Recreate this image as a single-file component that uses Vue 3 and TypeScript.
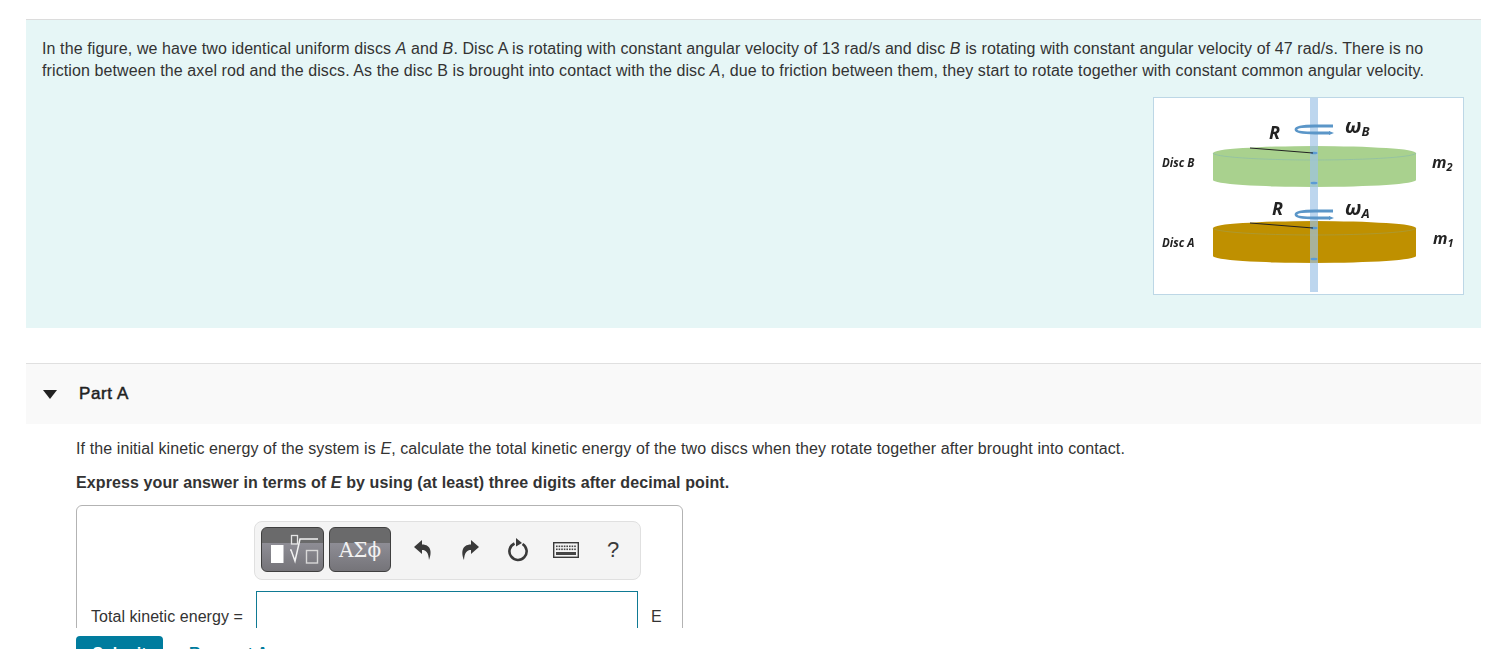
<script setup lang="ts">
const keys: number[] = [0, 1, 2, 3, 4, 5, 6, 7];
</script>

<template>
  <main class="page">
    <section class="intro">
      <p class="intro-text">
        In the figure, we have two identical uniform discs <i>A</i> and <i>B</i>. Disc A is rotating with constant angular velocity of 13 rad/s and disc <i>B</i> is rotating with constant angular velocity of 47 rad/s. There is no friction between the axel rod and the discs. As the disc B is brought into contact with the disc <i>A</i>, due to friction between them, they start to rotate together with constant common angular velocity.
      </p>
      <div class="figure-row">
        <svg class="figure" width="311" height="198" viewBox="0 0 311 198">
          <rect x="0.5" y="0.5" width="310" height="197" fill="#fff" stroke="#bdd7e6" />
          <path d="M60 56 A101.500 7 0 0 1 263 56 V83 A101.500 7 0 0 1 60 83 Z" fill="#a9d18e" />
          <path d="M60 56 A101.500 7 0 0 0 263 56" fill="none" stroke="#8fbfa6" stroke-width="0.8" />
          <path d="M60 131 A101.500 7 0 0 1 263 131 V159 A101.500 7 0 0 1 60 159 Z" fill="#bf9000" />
          <path d="M60 131 A101.500 7 0 0 0 263 131" fill="none" stroke="#a89a3a" stroke-width="0.8" />
          <rect x="157" y="1" width="8" height="194" fill="#9dc3e6" opacity="0.68" />
          <g fill="#5b9bd5">
            <ellipse cx="161" cy="56" rx="3.500" ry="1.300" />
            <ellipse cx="161" cy="86" rx="3.500" ry="1.300" />
            <ellipse cx="161" cy="131" rx="3.500" ry="1.300" />
            <ellipse cx="161" cy="162" rx="3.500" ry="1.300" />
          </g>
          <g fill="none" stroke="#5b96c8" stroke-width="2.800">
            <path d="M180 29 H162 C150 29 143 30 143 32.500 C143 35 150 36 162 36 H177" />
            <path d="M180 114 H162 C150 114 143 115 143 117.500 C143 120 150 121 162 121 H177" />
          </g>
          <g fill="#5b96c8">
            <path d="M176 34 L181 36 L176 38 Z" />
            <path d="M176 119 L181 121 L176 123 Z" />
          </g>
          <g fill="#222" stroke="#222" stroke-width="1">
            <path d="M160 56 L97 51" />
            <path d="M160 131 L97 126" />
          </g>
          <g class="fig-label">
            <text x="116" y="42" class="big">R</text>
            <text x="119" y="118" class="big">R</text>
            <text x="192" y="36" class="omega">ω<tspan class="sub" dy="3">B</tspan></text>
            <text x="192" y="118" class="omega">ω<tspan class="sub" dy="3">A</tspan></text>
            <text x="279" y="71" class="mid">m<tspan class="sub2" dy="3">2</tspan></text>
            <text x="280" y="147" class="mid">m<tspan class="sub2" dy="3">1</tspan></text>
            <text x="9" y="70" class="small">Disc B</text>
            <text x="9" y="150" class="small">Disc A</text>
          </g>
        </svg>
      </div>
    </section>

    <section class="part">
      <header class="part-head">
        <svg class="caret" width="14" height="9" viewBox="0 0 14 9"><path d="M0 0 H14 L7 9 Z" fill="#222" /></svg>
        <h2 class="part-title">Part A</h2>
      </header>
      <div class="part-body">
        <p class="question">If the initial kinetic energy of the system is <i>E</i>, calculate the total kinetic energy of the two discs when they rotate together after brought into contact.</p>
        <p class="express">Express your answer in terms of <i>E</i> by using (at least) three digits after decimal point.</p>

        <div class="answer-clip">
          <div class="answer">
            <div class="toolbar">
              <button class="tb-btn tb-math" type="button" aria-label="Templates">
                <svg width="61" height="43" viewBox="0 0 61 43">
                  <rect x="9" y="17" width="12.500" height="18" fill="#fff" />
                  <rect x="29.500" y="7.500" width="6" height="8.500" fill="none" stroke="#e4e4e4" stroke-width="1.300" />
                  <path d="M28 22 H29 L33 33 L38 11 H56" fill="none" stroke="#f2f2f2" stroke-width="1.500" />
                  <rect x="44.500" y="22.500" width="11" height="12.500" fill="none" stroke="#d8d8d8" stroke-width="1.400" />
                </svg>
              </button>
              <button class="tb-btn tb-greek" type="button">ΑΣϕ</button>
              <div class="tools">
                <svg class="tool" width="18" height="22" viewBox="0 0 18 22"><path d="M8 1 L0 8 L8 15 V11 C12 11 14.500 13.500 15 21 C18 14 17.500 5.500 8 5.500 Z" fill="#3a3a3a" /></svg>
                <svg class="tool" width="18" height="22" viewBox="0 0 18 22"><path d="M10 1 L18 8 L10 15 V11 C6 11 3.500 13.500 3 21 C0 14 0.500 5.500 10 5.500 Z" fill="#3a3a3a" /></svg>
                <svg class="tool" width="22" height="26" viewBox="0 0 22 26"><path d="M7.500 6.500 A8.600 8.600 0 1 0 15.500 7" fill="none" stroke="#3a3a3a" stroke-width="2.600" /><path d="M9 1 L15 6 L9 9.500 Z" fill="#3a3a3a" /></svg>
                <svg class="tool" width="26" height="16" viewBox="0 0 26 16">
                  <rect x="0.700" y="0.700" width="24.600" height="14.600" fill="#f4f4f4" stroke="#3a3a3a" stroke-width="1.400" />
                  <rect v-for="k in keys" :key="'a' + k" :x="3 + k * 2.600" y="3.500" width="1.600" height="1.600" fill="#444" />
                  <rect v-for="k in keys" :key="'b' + k" :x="3 + k * 2.600" y="6.500" width="1.600" height="1.600" fill="#444" />
                  <rect x="3" y="10" width="20" height="3" fill="#444" />
                </svg>
                <span class="help">?</span>
              </div>
            </div>
            <div class="answer-row">
              <label class="answer-label">Total kinetic energy =</label>
              <input class="answer-input" type="text" aria-label="Total kinetic energy" />
              <span class="unit">E</span>
            </div>
          </div>
        </div>

        <div class="actions">
          <button class="submit" type="button">Submit</button>
          <a class="request">Request Answer</a>
        </div>
      </div>
    </section>
  </main>
</template>

<style>
html, body { margin: 0; background: #fff; overflow: hidden; }
</style>

<style scoped>
.page {
  box-sizing: border-box;
  width: 1511px;
  height: 649px;
  overflow: hidden;
  padding: 19px 30px 0 26px;
  font-family: "Liberation Sans", Arial, sans-serif;
  color: #333;
  font-size: 16px;
  letter-spacing: 0.1px;
}
.intro {
  box-sizing: border-box;
  height: 309px;
  background: #e6f6f6;
  border-top: 1px solid #dcdcdc;
  padding: 18px 17px 0 16px;
}
.intro-text {
  margin: 0;
  line-height: 22px;
}
.figure-row {
  display: flex;
  justify-content: flex-end;
  margin-top: 15px;
}
.figure { display: block; filter: blur(0.35px); letter-spacing: 0; }
.fig-label text { font-family: "Open Sans", "Noto Sans", sans-serif; font-style: italic; font-weight: 700; fill: #222; }
.big { font-size: 18px; }
.omega { font-size: 20px; }
.mid { font-size: 16px; }
.small { font-size: 11.500px; fill: #333; }
.sub { font-size: 13px; }
.sub2 { font-size: 11px; }
.part { margin-top: 35px; }
.part-head {
  box-sizing: border-box;
  height: 61px;
  display: flex;
  align-items: center;
  background: #f9f9f9;
  border-top: 1px solid #e0e0e0;
  padding-left: 17px;
}
.caret { margin-right: 22px; }
.part-title { margin: 0; font-size: 17px; font-weight: 400; color: #222; letter-spacing: 0.6px; -webkit-text-stroke: 0.5px #222; }
.part-body { padding: 0 0 0 50px; }
.question { margin: 15px 0 0; line-height: 20px; }
.express { margin: 14px 0 0; line-height: 20px; font-weight: 700; }
.answer-clip {
  margin-top: 12px;
  width: 607px;
  height: 123px;
  overflow: hidden;
}
.answer {
  box-sizing: border-box;
  width: 607px;
  height: 160px;
  border: 1px solid #b3b3b3;
  border-radius: 6px;
  padding: 15px 0 0 14px;
}
.toolbar {
  box-sizing: border-box;
  width: 387px;
  height: 59px;
  margin-left: 163px;
  display: flex;
  align-items: center;
  gap: 5px;
  padding: 0 0 2px 6px;
  background: #f4f4f4;
  border: 1px solid #e0e0e0;
  border-radius: 8px;
}
.tb-btn {
  box-sizing: border-box;
  height: 45px;
  padding: 0;
  display: flex;
  align-items: center;
  justify-content: center;
  border: 1px solid #3f3f3f;
  border-radius: 6px;
  background: linear-gradient(#6a6a6b 0 15px, #8e8d95 15px, #757479 100%);
  color: #f2f2f2;
}
.tb-math { width: 63px; }
.tb-greek { width: 62px; font-family: "DejaVu Serif", "Liberation Serif", serif; font-size: 20px; letter-spacing: 0; }
.tools { display: flex; align-items: center; margin-left: 18px; }
.tool { display: block; }
.tool:nth-child(1) { margin-right: 29px; }
.tool:nth-child(2) { margin-right: 28px; }
.tool:nth-child(3) { margin-right: 24px; }
.tool:nth-child(4) { margin-right: 28px; }
.help { font-size: 22px; color: #3a3a3a; }
.answer-row { display: flex; align-items: flex-start; margin-top: 11px; }
.answer-label { margin-top: 16px; width: 165px; line-height: 20px; letter-spacing: 0.05px; }
.answer-input {
  box-sizing: border-box;
  width: 382px;
  height: 60px;
  padding: 0;
  background: #fff;
  border: 1px solid #0f7a94;
  outline: none;
}
.unit { margin: 16px 0 0 13px; line-height: 20px; }
.actions { display: flex; align-items: flex-start; margin-top: 8px; }
.submit {
  width: 87px;
  height: 36px;
  padding: 0;
  border: 0;
  border-radius: 4px 4px 0 0;
  background: #007c9e;
  color: #fff;
  font: 700 16px "Liberation Sans", Arial, sans-serif;
}
.request { margin: 8px 0 0 26px; color: #007c9e; font-weight: 700; line-height: 20px; }
</style>
